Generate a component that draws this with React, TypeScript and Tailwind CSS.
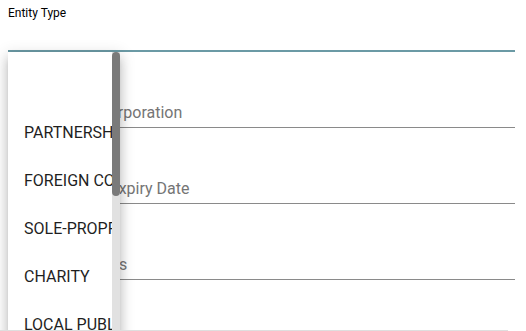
import React from "react";

const items = ["", "PARTNERSHIP", "FOREIGN CORPORATION", "SOLE-PROPRIETORSHIP", "CHARITY", "LOCAL PUBLIC BODY"];

function Field({ label, indent }: { label: string; indent: string }) {
  return (
    <div className="pt-[49px] pb-[2px] border-b border-[#8a8a8a]">
      <div className={`h-[24px] leading-[24px] text-[16px] text-[#757575] whitespace-nowrap ${indent}`}>{label}</div>
    </div>
  );
}

export default function App() {
  return (
    <div
      className="relative w-[526px] h-[331px] overflow-hidden bg-white"
      style={{ fontFamily: "Roboto, 'Liberation Sans', sans-serif" }}
    >
      <div className="ml-2 mr-[11px]">
        <div className="pt-[6px] text-[12px] leading-[14px] text-black">Entity Type</div>
        <div className="h-[32px] border-b-2 border-[#6b9aa5]" />
        <Field label="Place of Incorporation" indent="pl-[17px]" />
        <Field label="Registration Expiry Date" indent="pl-[12px]" />
        <Field label="Trading Names" indent="pl-[11px]" />
      </div>

      <div className="absolute left-2 top-[52px] w-[112px] h-[300px] bg-white flex shadow-[0_5px_5px_-3px_rgba(0,0,0,0.2),0_8px_10px_1px_rgba(0,0,0,0.14),0_3px_14px_2px_rgba(0,0,0,0.12)]">
        <div className="flex-1 overflow-hidden pt-[9px]">
          {items.map((it, i) => (
            <div
              key={i}
              className="h-[48px] leading-[48px] px-4 text-[16px] text-[#1f1f1f] whitespace-nowrap overflow-hidden"
            >
              {it}
            </div>
          ))}
        </div>
        <div className="w-2 bg-[#e1e1e1]">
          <div className="h-[144px] bg-[#7a7a7a] rounded-full" />
        </div>
      </div>

      <div className="absolute left-0 bottom-0 w-[508px] h-px bg-[#dedede]" />
    </div>
  );
}
